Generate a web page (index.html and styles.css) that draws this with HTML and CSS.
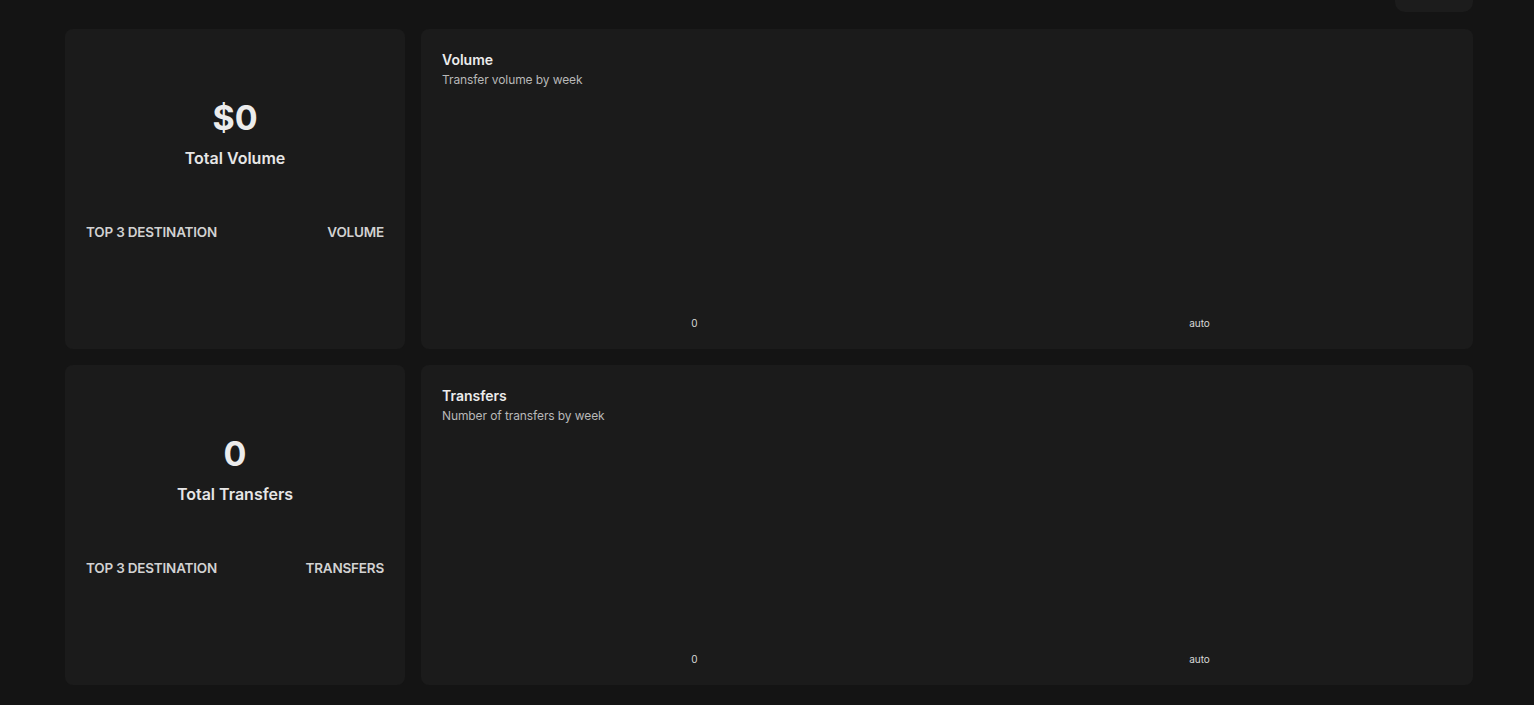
FILE: index.html
```html
<!DOCTYPE html>
<html lang="en">
<head>
    <meta charset="UTF-8">
    <meta name="viewport" content="width=device-width, initial-scale=1.0">
    <title>Bridge Analytics</title>
    <link rel="stylesheet" href="styles.css">
</head>
<body>
    <div class="page">
        <div class="toolbar">
            <button class="range-btn" aria-label="Select range">
                <svg width="16" height="16" viewBox="0 0 24 24" fill="none" stroke="#7a7a7a" stroke-width="2" stroke-linecap="round" stroke-linejoin="round"><path d="M7 15l5 5 5-5"/><path d="M7 9l5-5 5 5"/></svg>
            </button>
        </div>

        <div class="grid">
            <div class="card stat-card">
                <div class="stat">
                    <div class="stat-value">$0</div>
                    <div class="stat-label">Total Volume</div>
                </div>
                <div class="table-head">
                    <span>Top 3 Destination</span>
                    <span>Volume</span>
                </div>
            </div>

            <div class="card chart-card">
                <div class="chart-title">Volume</div>
                <div class="chart-sub">Transfer volume by week</div>
                <div class="chart-area"></div>
                <div class="axis">
                    <span>0</span>
                    <span>auto</span>
                </div>
            </div>

            <div class="card stat-card">
                <div class="stat">
                    <div class="stat-value">0</div>
                    <div class="stat-label">Total Transfers</div>
                </div>
                <div class="table-head">
                    <span>Top 3 Destination</span>
                    <span>Transfers</span>
                </div>
            </div>

            <div class="card chart-card">
                <div class="chart-title">Transfers</div>
                <div class="chart-sub">Number of transfers by week</div>
                <div class="chart-area"></div>
                <div class="axis">
                    <span>0</span>
                    <span>auto</span>
                </div>
            </div>
        </div>
    </div>
</body>
</html>
```

FILE: styles.css
```css
* {
    margin: 0;
    padding: 0;
    box-sizing: border-box;
    font-family: Inter, 'Noto Sans', sans-serif;
}

body {
    background: #141414;
    color: #e8e8e8;
    min-height: 100vh;
    overflow: hidden;
}

.page {
    width: 1408px;
    margin-left: 65px;
}

.toolbar {
    display: flex;
    justify-content: flex-end;
    margin-top: -24px;
    margin-bottom: 17px;
}

.range-btn {
    width: 78px;
    height: 36px;
    background: #1c1c1c;
    border: none;
    border-radius: 10px;
    display: flex;
    align-items: center;
    justify-content: flex-end;
    padding-right: 8px;
}

.grid {
    display: grid;
    grid-template-columns: 340px 1fr;
    grid-auto-rows: 320px;
    gap: 16px;
}

.card {
    background: #1b1b1b;
    border-radius: 8px;
    padding: 20px 21px;
}

.stat-card {
    display: flex;
    flex-direction: column;
}

.stat {
    padding-top: 49px;
    text-align: center;
}

.stat-value {
    font-size: 34px;
    line-height: 40px;
    font-weight: 700;
    color: #ececec;
}

.stat-label {
    margin-top: 8px;
    font-size: 16px;
    line-height: 24px;
    font-weight: 600;
    color: #e6e6e6;
}

.table-head {
    margin-top: 52px;
    display: flex;
    justify-content: space-between;
    font-size: 13.5px;
    line-height: 20px;
    font-weight: 600;
    letter-spacing: -0.2px;
    text-transform: uppercase;
    color: #d2d2d2;
}

.chart-card {
    display: flex;
    flex-direction: column;
}

.chart-title {
    font-size: 14px;
    line-height: 22px;
    font-weight: 600;
    color: #ececec;
}

.chart-sub {
    font-size: 12px;
    line-height: 18px;
    letter-spacing: -0.1px;
    color: #b8b8b8;
}

.chart-area {
    flex: 1;
}

.axis {
    display: grid;
    grid-template-columns: 1fr 1fr;
    text-align: center;
    font-size: 10px;
    line-height: 12px;
    color: #d8d8d8;
}
```
